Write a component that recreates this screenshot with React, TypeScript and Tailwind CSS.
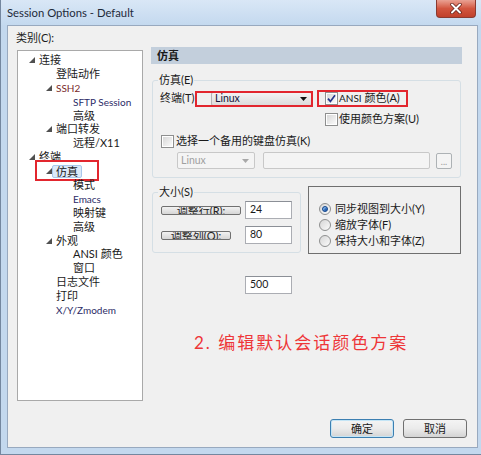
import {FC, ReactNode} from "react";

const Arrow: FC = () => (
    <svg width="6" height="6" viewBox="0 0 6 6" className="shrink-0">
        <polygon points="6,0 6,6 0,6" fill="#505050" />
    </svg>
);

const CheckBox: FC<{checked?: boolean}> = ({checked}) => (
    <span className="w-[13px] h-[13px] shrink-0 border border-[#8e8f8f] bg-white p-[1px] flex">
        <span className="flex-1 flex items-center justify-center bg-linear-to-br from-[#d8d8d8] to-[#fafafa]">
            {checked && (
                <svg width="9" height="9" viewBox="0 0 9 9">
                    <path d="M1 4.6 L3.4 7.4 L8 1.2" stroke="#26358a" strokeWidth="1.7" fill="none" />
                </svg>
            )}
        </span>
    </span>
);

const Radio: FC<{checked?: boolean}> = ({checked}) => (
    <span className="w-[12px] h-[12px] shrink-0 rounded-full border border-[#8e8f8f] bg-linear-to-br from-[#d6d6d6] to-[#fbfbfb] flex items-center justify-center">
        {checked && <span className="w-[6px] h-[6px] rounded-full bg-[#2a64b4] border border-[#1b4c8f] shadow-[inset_1px_1px_1px_#8fc0f0]" />}
    </span>
);

const TextBox: FC<{value?: string; className?: string}> = ({value, className}) => (
    <div className={`h-[18px] bg-white border border-[#abadb3] border-t-[#8b8f96] flex items-center pl-[4px] text-[10.5px] ${className ?? ""}`}>
        {value}
    </div>
);

const Button: FC<{children: ReactNode; primary?: boolean}> = ({children, primary}) => (
    <button
        type="button"
        className={`w-[64px] h-[19px] rounded-[3px] border text-[11px] leading-none bg-linear-to-b from-[#f4f4f4] via-[#ebebeb] to-[#d4d4d4] text-[#1a1a1a] ${
            primary ? "border-[#3c7fb1] shadow-[inset_0_0_0_1px_#c4e5f6]" : "border-[#707070]"
        }`}>
        {children}
    </button>
);

// the row/column buttons are squashed in the original dialog, so their labels show cut off
const SmallButton: FC<{label: string; width: string}> = ({label, width}) => (
    <div className={`${width} h-[9px] overflow-hidden rounded-[2px] border border-[#707070] bg-linear-to-b from-[#f2f2f2] to-[#d6d6d6] flex items-center justify-center text-[11px] leading-[9px] text-[#222]`}>
        {label}
    </div>
);

type Node = {label: string; level: number; arrow?: boolean; latin?: boolean; color?: string; selected?: boolean};

const tree: Node[] = [
    {label: "连接", level: 0, arrow: true},
    {label: "登陆动作", level: 1},
    {label: "SSH2", level: 1, arrow: true, latin: true, color: "text-[#7a2a2a]"},
    {label: "SFTP Session", level: 2, latin: true, color: "text-[#2b2b66]"},
    {label: "高级", level: 2},
    {label: "端口转发", level: 1, arrow: true},
    {label: "远程/X11", level: 2},
    {label: "终端", level: 0, arrow: true},
    {label: "仿真", level: 1, arrow: true, selected: true},
    {label: "模式", level: 2},
    {label: "Emacs", level: 2, latin: true, color: "text-[#2b2b66]"},
    {label: "映射键", level: 2},
    {label: "高级", level: 2},
    {label: "外观", level: 1, arrow: true},
    {label: "ANSI 颜色", level: 2},
    {label: "窗口", level: 2},
    {label: "日志文件", level: 1},
    {label: "打印", level: 1},
    {label: "X/Y/Zmodem", level: 1, latin: true, color: "text-[#2b2b66]"},
];

const pad = ["pl-[11px]", "pl-[28px]", "pl-[45px]"];

const App: FC = () => {
    return (
        <div className="w-[481px] h-[455px] overflow-hidden bg-[#c3d8ee] border-l border-b border-[#74879f] font-['Lato','Noto_Sans_CJK_SC',sans-serif] text-[11px] text-[#1a1a1a] flex flex-col">
            {/* title bar */}
            <div className="h-[25px] shrink-0 flex justify-between items-start pl-[6px] pr-[5px] bg-linear-to-b from-[#d9e7f6] to-[#c4d9ef]">
                <span className="mt-[5px] text-[11.3px] leading-[15px] text-[#1e2a3a]">Session Options - Default</span>
                <div className="w-[40px] h-[18px] rounded-b-[4px] border border-t-0 border-[#8a3a30] bg-linear-to-b from-[#e9a193] via-[#d2553f] to-[#c0402b] flex items-center justify-center">
                    <svg width="12" height="11" viewBox="0 0 12 11">
                        <path d="M2 1.5 L10 9.5 M10 1.5 L2 9.5" stroke="#5a1a14" strokeWidth="3.4" strokeLinecap="round" />
                        <path d="M2 1.5 L10 9.5 M10 1.5 L2 9.5" stroke="#ffffff" strokeWidth="2" strokeLinecap="round" />
                    </svg>
                </div>
            </div>

            {/* client area */}
            <div className="ml-[6px] w-[471px] h-[423px] border border-[#98a9bf] bg-[#f0f0f0] flex flex-col">
                <div className="flex">
                    {/* categories */}
                    <div className="w-[143px] shrink-0 pl-[8px] pt-[5px] flex flex-col">
                        <span className="leading-[14px]">类别(C):</span>
                        <div className="mt-[5px] ml-[1px] w-[126px] h-[351px] bg-white border border-[#a9a9a9] pt-[2px]">
                            {tree.map((n, i) => (
                                <div key={i} className={`relative h-[13.9px] flex items-center ${pad[n.level]}`}>
                                    <span className="w-[10px] shrink-0 flex">{n.arrow && <Arrow />}</span>
                                    {n.selected ? (
                                        <span className="-ml-[4px] px-[3px] h-[13px] leading-[12px] rounded-[2px] bg-[#dae9f8] border border-[#a9c8ec]">{n.label}</span>
                                    ) : (
                                        <span className={`leading-[14px] whitespace-nowrap ${n.latin ? "text-[10px]" : ""} ${n.color ?? ""}`}>{n.label}</span>
                                    )}
                                    {n.selected && (
                                        <span className="absolute left-[17px] top-[-4px] w-[64px] h-[21px] border-2 border-[#e2262e]" />
                                    )}
                                </div>
                            ))}
                        </div>
                    </div>

                    {/* page */}
                    <div className="w-[311px] flex flex-col">
                        <div className="mt-[21px] h-[17px] bg-[#c3cfdc] pl-[6px] font-bold leading-[17px]">仿真</div>

                        <fieldset className="mt-[9px] ml-[1px] w-[309px] border border-[#d5dfe5] rounded-[3px] pb-[8px]">
                            <legend className="ml-[5px] px-[1px] leading-[14px]">仿真(E)</legend>
                            <div className="mt-[3px] h-[17px] flex items-center pl-[7px]">
                                <span className="w-[35px] shrink-0">终端(T)</span>
                                <div className="w-[118px] h-[16px] pl-[16px] pr-[1px] py-[1px] flex outline-2 outline-solid outline-offset-[-2px] outline-[#e2262e]">
                                    <div className="flex-1 h-[14px] border border-[#b5b5b5] rounded-[2px] bg-linear-to-b from-[#f3f3f3] to-[#dcdcdc] flex items-center justify-between pl-[3px] pr-[4px]">
                                        <span className="text-[10.5px] text-[#14143a]">Linux</span>
                                        <svg width="7" height="4" viewBox="0 0 7 4">
                                            <polygon points="0,0 7,0 3.5,4" fill="#111" />
                                        </svg>
                                    </div>
                                </div>
                                <div className="ml-[4px] w-[91px] h-[17px] pl-[8px] flex items-center gap-[1px] outline-2 outline-solid outline-offset-[-2px] outline-[#e2262e]">
                                    <CheckBox checked />
                                    <span className="whitespace-nowrap"><span className="text-[10px]">ANSI</span> 颜色(A)</span>
                                </div>
                            </div>
                            <div className="mt-[5px] h-[14px] pl-[172px] flex items-center gap-[1px]">
                                <CheckBox />
                                <span>使用颜色方案(U)</span>
                            </div>
                            <div className="mt-[8px] h-[14px] pl-[8px] flex items-center gap-[2px]">
                                <CheckBox />
                                <span>选择一个备用的键盘仿真(K)</span>
                            </div>
                            <div className="mt-[4px] h-[17px] pl-[24px] flex items-center">
                                <div className="w-[78px] h-[17px] border border-[#c8c8c8] rounded-[2px] bg-[#f4f4f4] flex items-center justify-between pl-[3px] pr-[5px] text-[10.5px] text-[#a0a0a0]">
                                    <span>Linux</span>
                                    <svg width="7" height="4" viewBox="0 0 7 4">
                                        <polygon points="0,0 7,0 3.5,4" fill="#a8a8a8" />
                                    </svg>
                                </div>
                                <div className="ml-[8px] w-[167px] h-[17px] border border-[#c8c8c8] rounded-[2px] bg-[#f4f4f4]" />
                                <div className="ml-[6px] w-[16px] h-[16px] border border-[#adb2b5] rounded-[2px] bg-[#f4f4f4] flex items-end justify-center pb-[2px] text-[9px] leading-[8px] text-[#9a9a9a]">
                                    ...
                                </div>
                            </div>
                        </fieldset>

                        <div className="mt-[7px] flex items-start">
                            <fieldset className="ml-[1px] w-[149px] border border-[#d5dfe5] rounded-[3px] pb-[8px]">
                                <legend className="ml-[5px] px-[1px] leading-[14px]">大小(S)</legend>
                                <div className="mt-[2px] h-[18px] pl-[8px] flex items-center">
                                    <SmallButton label="调整行(R):" width="w-[80px]" />
                                    <TextBox value="24" className="ml-[4px] w-[47px]" />
                                </div>
                                <div className="mt-[7px] h-[18px] pl-[8px] flex items-center">
                                    <SmallButton label="调整列(O):" width="w-[70px]" />
                                    <TextBox value="80" className="ml-[14px] w-[47px]" />
                                </div>
                            </fieldset>
                            <div className="ml-[7px] mt-[1px] w-[153px] h-[68px] border border-[#6f6f6f] pt-[14px] pl-[10px] flex flex-col">
                                {[
                                    {t: "同步视图到大小(Y)", c: true},
                                    {t: "缩放字体(F)"},
                                    {t: "保持大小和字体(Z)"},
                                ].map((r) => (
                                    <div key={r.t} className="h-[16px] flex items-center gap-[4px]">
                                        <Radio checked={r.c} />
                                        <span>{r.t}</span>
                                    </div>
                                ))}
                            </div>
                        </div>

                        <TextBox value="500" className="mt-[22px] ml-[94px] w-[47px]" />

                        <div className="mt-[39px] ml-[43px] text-[17px] leading-[20px] tracking-[2px] text-[#ee3638] whitespace-nowrap">
                            2. 编辑默认会话颜色方案
                        </div>
                    </div>
                </div>

                <div className="mt-[18px] flex justify-end gap-[9px] pr-[10px]">
                    <Button primary>确定</Button>
                    <Button>取消</Button>
                </div>
            </div>
        </div>
    );
};

export default App;
